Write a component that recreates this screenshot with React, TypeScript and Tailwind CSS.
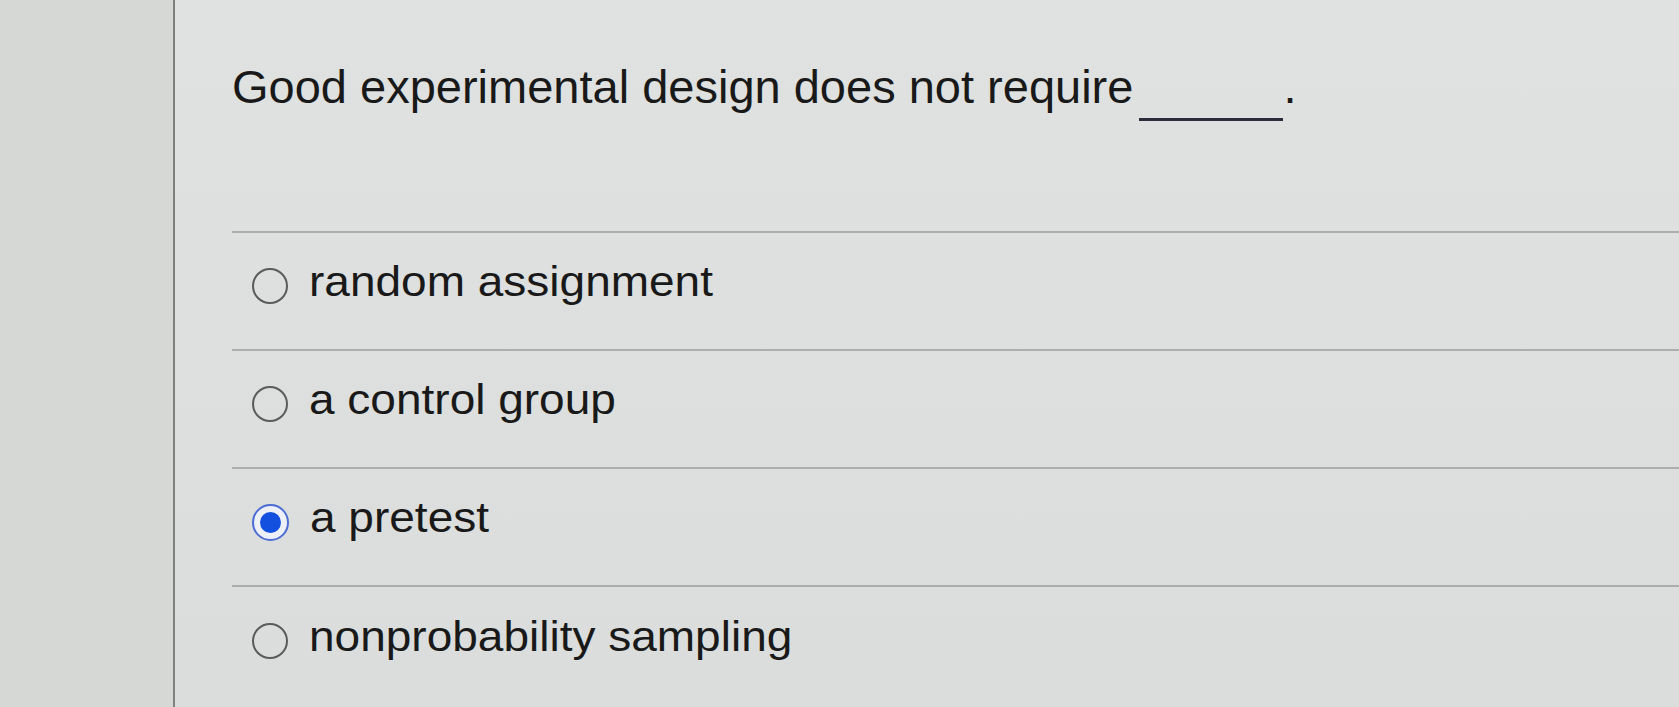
import React from "react";

const options = [
  { label: "random assignment", selected: false },
  { label: "a control group", selected: false },
  { label: "a pretest", selected: true },
  { label: "nonprobability sampling", selected: false },
];

function Radio({ selected }: { selected: boolean }) {
  if (selected) {
    return (
      <span className="flex h-[37px] w-[37px] shrink-0 items-center justify-center rounded-full border-[2.5px] border-[#4d6cd4] bg-[#eef0f8]">
        <span className="h-[21px] w-[21px] rounded-full bg-[#1450e0]" />
      </span>
    );
  }
  return <span className="h-[36px] w-[36px] shrink-0 rounded-full border-[2.5px] border-[#5a5c5a]" />;
}

export default function App() {
  return (
    <div
      className="flex h-[707px] w-full overflow-hidden bg-[#dde0de] text-[#191919]"
      style={{ fontFamily: '"Liberation Sans", Arial, Helvetica, sans-serif' }}
    >
      <aside className="w-[175px] shrink-0 border-r-2 border-[#7e807e] bg-[#d6d8d6]" />
      <main className="flex-1 bg-gradient-to-b from-[#dfe2e0] to-[#dadddb] pl-[57px]">
        <div className="h-[231px] pt-[63px]">
          <p className="text-[47px] leading-[47px]">
            Good experimental design does not require
            <span className="ml-[6px] inline-block h-[3px] w-[144px] bg-[#2c2c3c] align-[-18px]" />
            .
          </p>
        </div>
        <div className="border-t-2 border-[#acaeac]">
          {options.map((o, i) => (
            <div
              key={o.label}
              className={`flex h-[118px] items-center gap-[21px] pb-[10px] pl-[20px] ${
                i < options.length - 1 ? "border-b-2 border-[#acaeac]" : ""
              }`}
            >
              <Radio selected={o.selected} />
              <span className="-translate-y-[5px] scale-y-[0.93] text-[46px] leading-[46px]">{o.label}</span>
            </div>
          ))}
        </div>
      </main>
    </div>
  );
}
